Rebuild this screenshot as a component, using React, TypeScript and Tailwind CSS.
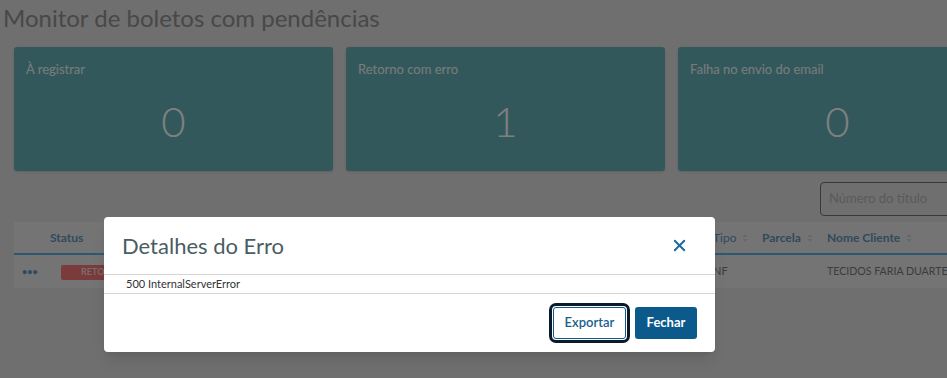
import { X } from "lucide-react";

const CARDS = [
  { label: "À registrar", value: 0 },
  { label: "Retorno com erro", value: 1 },
  { label: "Falha no envio do email", value: 0 },
];

function SortIcon() {
  return (
    <svg width="6" height="10" viewBox="0 0 6 10" className="ml-1.5 inline-block">
      <path d="M3 1L5.5 4H0.5Z" fill="#c8d0d6" />
      <path d="M3 9L5.5 6H0.5Z" fill="#c8d0d6" />
    </svg>
  );
}

export default function App() {
  return (
    <div className="relative h-[378px] w-[947px] overflow-hidden bg-[#dedede] font-['Lato','Noto_Sans',sans-serif]">
      <div className="w-[1011px]">
        <h1 className="px-[3px] pt-[2px] text-[24px] leading-[32px] text-[#909090]">
          Monitor de boletos com pendências
        </h1>

        <div className="mt-[13px] flex gap-[13px] px-[14px]">
          {CARDS.map((c) => (
            <div
              key={c.label}
              className="flex h-[124px] w-[319px] shrink-0 flex-col rounded-[3px] bg-[#64b0b6] px-[12px] pt-[14px] shadow-sm"
            >
              <span className="text-[13px] leading-[16px] text-white/90">{c.label}</span>
              <span className="mt-[22px] text-center text-[42px] font-light leading-[44px] text-white">
                {c.value}
              </span>
            </div>
          ))}
        </div>

        <div className="mt-[11px] flex justify-end px-[14px]">
          <div className="flex h-[34px] w-[177px] items-center rounded-[4px] border border-[#707070] px-[8px] text-[13px] text-[#b4b4b4]">
            Número do título
          </div>
        </div>

        <div className="mx-[14px] mt-[6px] bg-[#e8e8e8]">
          <div className="flex h-[33px] items-center border-b-2 border-[#5ab0e8] text-[12px] font-bold text-[#5e96b8]">
            <div className="w-[26px]" />
            <div className="w-[60px] pl-[10px]">Status</div>
            <div className="flex-1" />
            <div className="w-[49px] font-normal">
              Tipo
              <SortIcon />
            </div>
            <div className="w-[65px]">
              Parcela
              <SortIcon />
            </div>
            <div className="w-[170px]">
              Nome Cliente
              <SortIcon />
            </div>
          </div>
          <div className="flex h-[33px] items-center text-[11px] text-[#787878]">
            <div className="w-[26px] pl-[8px] text-[9px] font-bold leading-none text-[#5c94c0]">
              •••
            </div>
            <div className="w-[60px] pl-[21px]">
              <span className="inline-flex h-[15px] w-[70px] items-center rounded-[2px] bg-[#f27676] pl-[20px] text-[9px] font-bold text-white/70">
                RETORNO
              </span>
            </div>
            <div className="flex-1" />
            <div className="w-[49px]">NF</div>
            <div className="w-[65px]" />
            <div className="w-[170px] whitespace-nowrap text-[10.6px]">TECIDOS FARIA DUARTE</div>
          </div>
        </div>
      </div>

      <div className="absolute inset-0 bg-black/50" />

      <div className="absolute left-[104px] top-[217px] w-[611px] rounded-[4px] bg-white shadow-lg">
        <div className="flex h-[58px] items-center justify-between border-b border-[#d6d6d6] pl-[18px] pr-[26px]">
          <h2 className="text-[22px] text-[#4a5d62]">Detalhes do Erro</h2>
          <X size={19} strokeWidth={2.4} className="text-[#1a6a9e]" />
        </div>
        <div className="h-[19px] border-b border-[#d6d6d6] pl-[22px] text-[11px] leading-[18px] text-[#333]">
          500 InternalServerError
        </div>
        <div className="flex h-[58px] items-center justify-end gap-[9px] pr-[18px]">
          <button className="h-[32px] w-[73px] rounded-[3px] border border-[#0c5a8c] bg-white text-[13px] font-semibold text-[#1a5f8e] outline-3 outline-offset-1 outline-[#0a1a2a]">
            Exportar
          </button>
          <button className="h-[32px] w-[62px] rounded-[3px] bg-[#0c5a8c] text-[13px] font-bold text-white">
            Fechar
          </button>
        </div>
      </div>
    </div>
  );
}
